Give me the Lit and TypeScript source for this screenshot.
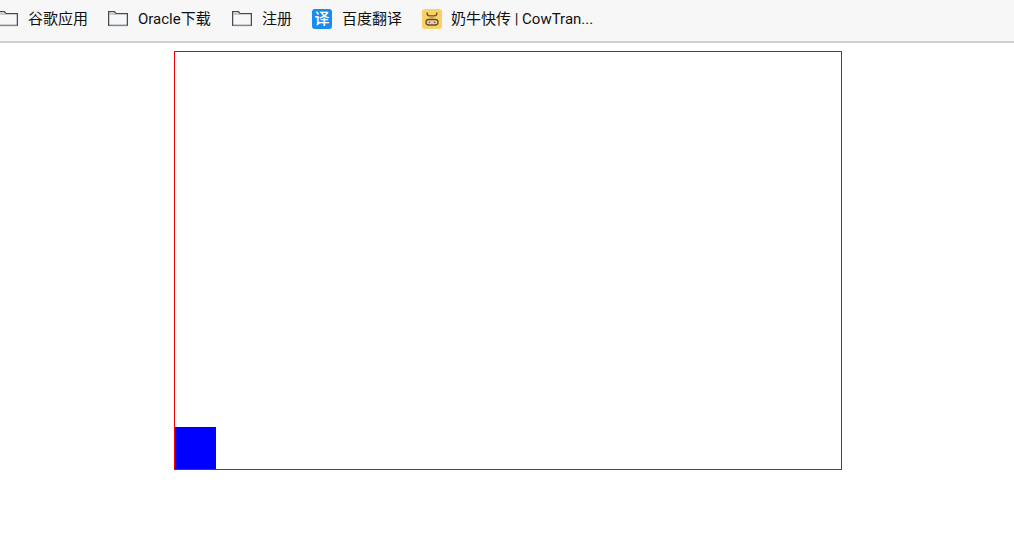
import { LitElement, html, css, svg } from "lit";
import { customElement } from "lit/decorators.js";

const folder = svg`<svg class="ico" width="20" height="20" viewBox="0 0 20 20" fill="none">
  <path d="M0.6 16.4V2.6H6.5L8 4.6H19.4V16.4Z" stroke="#454b52" stroke-width="1.3" fill="#f7f7f7"/>
  <path d="M1 16.6H19.4" stroke="#6f90b0" stroke-width="1.1"/>
  <path d="M1.2 5H8" stroke="#9aa0a8" stroke-width="1"/>
</svg>`;

const cow = svg`<svg class="ico" width="20" height="20" viewBox="0 0 20 20">
  <rect width="20" height="20" rx="3" fill="#fad163"/>
  <path d="M5 3.5C5 6 6 6.8 7.5 6.8H12.5C14 6.8 15 6 15 3.5" fill="none" stroke="#5d5238" stroke-width="1.3"/>
  <path d="M7.5 8.8H11.5" stroke="#c9a24a" stroke-width="1.2"/>
  <rect x="4" y="10.5" width="12" height="5.5" rx="2.7" fill="#f6c99a" stroke="#5d5238" stroke-width="1.3"/>
  <circle cx="7.5" cy="13.2" r="0.8" fill="#5d5238"/>
  <circle cx="12.5" cy="13.2" r="0.8" fill="#5d5238"/>
</svg>`;

@customElement("app-root")
export class AppRoot extends LitElement {
  static styles = css`
    :host {
      display: block;
      width: 1014px;
      height: 542px;
      background: #fff;
      overflow: hidden;
      font-family: Roboto, "Noto Sans CJK SC", sans-serif;
    }
    .bar {
      box-sizing: border-box;
      height: 43px;
      padding: 0 0 3px 0;
      background: #f7f7f7;
      border-bottom: 2px solid #d0d0d0;
      display: flex;
      align-items: center;
    }
    .item {
      display: flex;
      align-items: center;
      gap: 10px;
      font-size: 15px;
      line-height: 20px;
      color: #111;
      white-space: nowrap;
    }
    .first { margin-left: -2px; }
    .w1 { width: 110px; }
    .w2 { width: 124px; }
    .w3 { width: 80px; }
    .w4 { width: 110px; }
    .cow { gap: 9px; }
    .ico { flex: none; display: block; }
    .tile {
      flex: none;
      width: 20px;
      height: 20px;
      border-radius: 3px;
      background: #1a8cf0;
      color: #fff;
      font-size: 15px;
      line-height: 20px;
      text-align: center;
      font-weight: 500;
    }
    .stage {
      box-sizing: border-box;
      width: 668px;
      height: 419px;
      margin: 8px 0 0 174px;
      border: 1px solid #f00000;
      display: flex;
      align-items: flex-end;
    }
    .square {
      width: 41px;
      height: 42px;
      background: #0000ff;
    }
  `;

  render() {
    return html`
      <div class="bar">
        <div class="item first w1">${folder}<span>谷歌应用</span></div>
        <div class="item w2">${folder}<span>Oracle下载</span></div>
        <div class="item w3">${folder}<span>注册</span></div>
        <div class="item w4"><span class="tile">译</span><span>百度翻译</span></div>
        <div class="item cow">${cow}<span>奶牛快传 | CowTran...</span></div>
      </div>
      <div class="stage"><div class="square"></div></div>
    `;
  }
}
